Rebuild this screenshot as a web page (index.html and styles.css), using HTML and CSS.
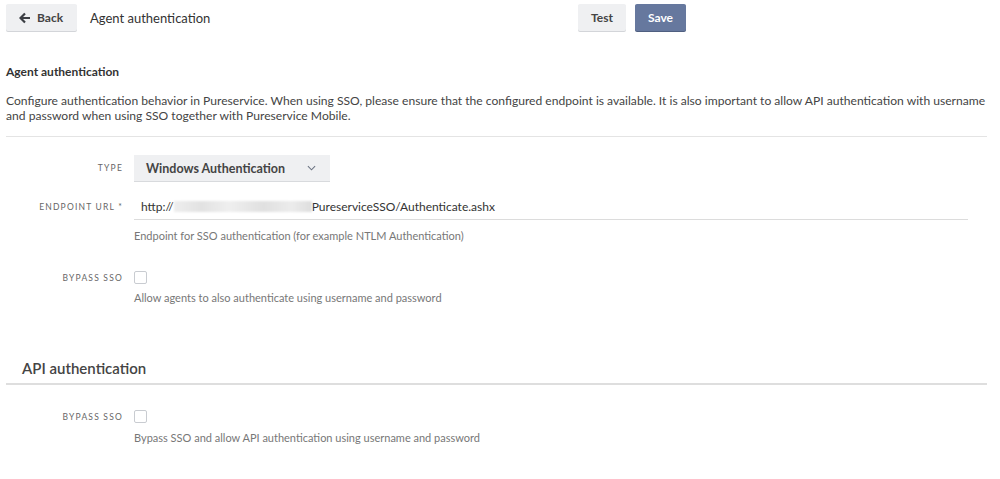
FILE: index.html
```html
<!DOCTYPE html>
<html lang="en">
  <head>
    <meta charset="UTF-8" />
    <title>Agent authentication</title>
    <link rel="stylesheet" href="styles.css">
  </head>
  <body>
    <div class="topbar">
      <button class="btn btn-back" type="button">
        <svg class="icon-back" viewBox="0 0 12 12" width="12" height="12">
          <path d="M6 1.5 L1.5 6 L6 10.5 M1.5 6 H11" fill="none" stroke="#3c3f44" stroke-width="2.2" stroke-linejoin="miter"/>
        </svg>
        Back
      </button>
      <div class="page-title">Agent authentication</div>
      <div class="actions">
        <button class="btn btn-test" type="button">Test</button>
        <button class="btn btn-save" type="button">Save</button>
      </div>
    </div>

    <div class="section">
      <h3 class="section-title">Agent authentication</h3>
      <p class="section-desc">
        Configure authentication behavior in Pureservice. When using SSO, please ensure that the configured endpoint is available. It is also important to allow API authentication with username and password when using SSO together with Pureservice Mobile.
      </p>
      <hr class="divider" />

      <div class="field field-type">
        <label class="field-label">Type</label>
        <div class="field-control">
          <div class="select">
            <span>Windows Authentication</span>
            <svg class="chevron" viewBox="0 0 10 6" width="9" height="6">
              <path d="M1 1 L5 5 L9 1" fill="none" stroke="#6b7382" stroke-width="1.2"/>
            </svg>
          </div>
        </div>
      </div>

      <div class="field field-url">
        <label class="field-label">Endpoint URL *</label>
        <div class="field-control">
          <div class="text-input">
            http://<span class="blurred"></span>PureserviceSSO/Authenticate.ashx
          </div>
          <div class="help">Endpoint for SSO authentication (for example NTLM Authentication)</div>
        </div>
      </div>

      <div class="field field-check">
        <label class="field-label">Bypass SSO</label>
        <div class="field-control">
          <span class="checkbox"></span>
          <div class="help">Allow agents to also authenticate using username and password</div>
        </div>
      </div>
    </div>

    <div class="section section-api">
      <h2 class="group-title">API authentication</h2>
      <div class="field field-check">
        <label class="field-label">Bypass SSO</label>
        <div class="field-control">
          <span class="checkbox"></span>
          <div class="help">Bypass SSO and allow API authentication using username and password</div>
        </div>
      </div>
    </div>
  </body>
</html>
```

FILE: styles.css
```css
* {
  box-sizing: border-box;
}

body {
  font-family: Lato, "Open Sans", sans-serif;
  background: #ffffff;
  color: #444;
  margin: 0;
  padding: 0;
  font-size: 12px;
}

.topbar {
  display: flex;
  align-items: center;
  padding: 4px 6px 0;
  height: 31px;
}

.btn {
  font-family: inherit;
  border: none;
  border-radius: 2px;
  height: 27px;
  font-size: 12px;
  font-weight: bold;
  cursor: pointer;
}

.btn-back,
.btn-test {
  background: #eff0f2;
  color: #444;
  box-shadow: 0 1px 0 #d3d5d9;
}

.btn-back {
  width: 71px;
  display: flex;
  align-items: center;
  gap: 6px;
  padding-left: 13px;
}

.page-title {
  width: 501px;
  padding-left: 13px;
  font-size: 13px;
  color: #333;
}

.actions {
  display: flex;
  gap: 9px;
}

.btn-test {
  width: 48px;
}

.btn-save {
  width: 51px;
  background: #66789e;
  color: #fff;
  box-shadow: 0 1px 0 #4f5f80;
}

.section {
  padding: 0 13px 0 6px;
}

.section-title {
  font-size: 12px;
  font-weight: bold;
  color: #333;
  margin: 33px 0 0;
  line-height: 15px;
}

.section-desc {
  margin: 14px 0 0;
  line-height: 15px;
  color: #444;
  font-size: 12.1px;
}

.divider {
  border: none;
  border-top: 1px solid #e4e4e4;
  margin: 13px 0 0;
}

.field {
  display: grid;
  grid-template-columns: 117px 1fr;
  column-gap: 11px;
}

.field-label {
  text-align: right;
  text-transform: uppercase;
  font-size: 8.5px;
  letter-spacing: 1.2px;
  color: #666;
  line-height: 26px;
}

.field-type {
  margin-top: 18px;
}

.select {
  width: 196px;
  height: 26px;
  background: #eff0f2;
  box-shadow: 0 1px 0 #d8dadd;
  display: flex;
  align-items: center;
  justify-content: space-between;
  padding: 0 14px 0 12px;
  font-weight: bold;
  font-size: 12.5px;
  color: #444;
}

.field-url {
  margin-top: 13px;
}

.text-input {
  height: 26px;
  line-height: 26px;
  padding-left: 7px;
  border-bottom: 1px solid #dcdcdc;
  font-size: 12px;
  color: #333;
  margin-right: 19px;
  display: flex;
  align-items: center;
}

.blurred {
  display: inline-block;
  width: 138px;
  height: 11px;
  background: linear-gradient(90deg, #eee 0%, #e2e2e2 20%, #efefef 40%, #e0e0e0 65%, #ececec 85%, #ddd 100%);
  filter: blur(1px);
}

.help {
  font-size: 11px;
  color: #777;
  margin-top: 9px;
  line-height: 13px;
}

.field-check {
  margin-top: 29px;
}

.field-check .field-label {
  line-height: 14px;
}

.checkbox {
  display: block;
  width: 13px;
  height: 13px;
  border: 1px solid #c9ccd1;
  border-radius: 2px;
  background: #fff;
}

.field-check .help {
  margin-top: 7px;
}

.section-api {
  margin-top: 55px;
}

.group-title {
  font-size: 15px;
  font-weight: 600;
  color: #444;
  margin: 0;
  padding: 0 0 6px 16px;
  border-bottom: 2px solid #dedede;
  line-height: 18px;
}

.section-api .field-check {
  margin-top: 25px;
}

.section-api .field-check .help {
  margin-top: 8px;
}
```
